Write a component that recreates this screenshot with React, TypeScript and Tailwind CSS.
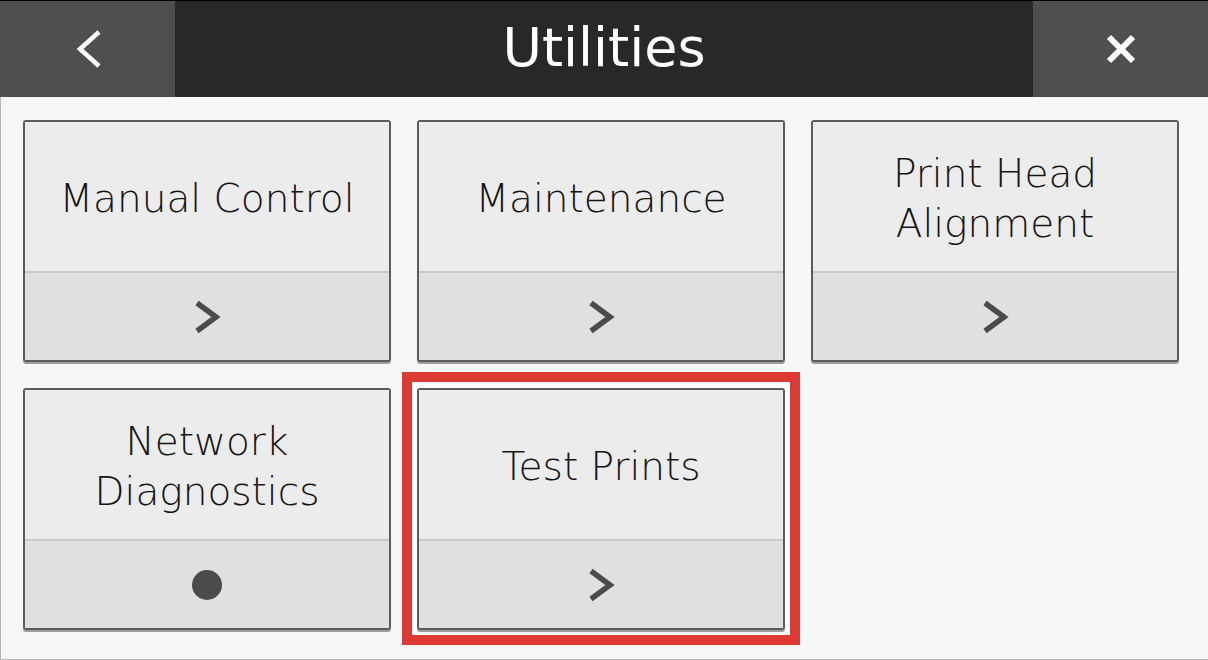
import React from 'react';

type Tile = {
  label: string[];
  icon: 'chevron' | 'dot';
  highlighted?: boolean;
};

const tiles: Tile[] = [
  { label: ['Manual Control'], icon: 'chevron' },
  { label: ['Maintenance'], icon: 'chevron' },
  { label: ['Print Head', 'Alignment'], icon: 'chevron' },
  { label: ['Network', 'Diagnostics'], icon: 'dot' },
  { label: ['Test Prints'], icon: 'chevron', highlighted: true },
];

function Chevron() {
  return (
    <svg width="28" height="34" viewBox="0 0 28 34" fill="none">
      <polyline points="4,3 23,17 4,31" stroke="#4b4b4b" strokeWidth="5.5" strokeLinejoin="miter" />
    </svg>
  );
}

function TileCard({ tile }: { tile: Tile }) {
  return (
    <div className="relative">
      {tile.highlighted && (
        <div className="absolute -top-[16px] -left-[15px] -right-[15px] -bottom-[15px] border-[10px] border-[#dc3a33] bg-white" />
      )}
      <div className="relative flex h-[242px] flex-col overflow-hidden rounded-[3px] border-2 border-[#5b5b5b] shadow-[0_2px_0_#9c9c9c]">
        <div className="flex h-[151px] flex-col items-center justify-center border-b-2 border-[#c9c9c9] bg-[#ececec] pt-[4px] text-[39px] leading-[50px] font-extralight text-[#141414]">
          {tile.label.map((line) => (
            <span key={line}>{line}</span>
          ))}
        </div>
        <div className="flex flex-1 items-center justify-center bg-[#dfe0df]">
          {tile.icon === 'chevron' ? (
            <Chevron />
          ) : (
            <div className="h-[30px] w-[30px] rounded-full bg-[#4b4b4b]" />
          )}
        </div>
      </div>
    </div>
  );
}

export default function App() {
  return (
    <div
      className="flex h-[660px] w-[1208px] flex-col overflow-hidden"
      style={{ fontFamily: '"DejaVu Sans", "Liberation Sans", sans-serif' }}
    >
      {/* Header */}
      <div className="flex h-[97px] border-t border-black bg-[#272928]">
        <button className="flex w-[175px] items-center justify-center bg-[#4f4f4f]">
          <svg width="30" height="40" viewBox="0 0 30 40" fill="none">
            <polyline points="26,3 7,20 26,37" stroke="#ffffff" strokeWidth="4.5" strokeLinejoin="miter" />
          </svg>
        </button>
        <div className="flex flex-1 items-center justify-center pb-[4px] text-[54px] text-white">
          Utilities
        </div>
        <button className="flex w-[175px] items-center justify-center bg-[#4f4f4f]">
          <svg width="32" height="30" viewBox="0 0 32 30" fill="none">
            <path d="M4 3 L28 27 M28 3 L4 27" stroke="#ffffff" strokeWidth="6" />
          </svg>
        </button>
      </div>

      {/* Tiles */}
      <div className="flex-1 border-b border-l border-[#b8b8b8] bg-[#f6f8f7] pl-[22px] pt-[23px]">
        <div className="grid w-[1156px] grid-cols-3 gap-x-[26px] gap-y-[26px]">
          {tiles.map((tile) => (
            <TileCard key={tile.label.join(' ')} tile={tile} />
          ))}
        </div>
      </div>
    </div>
  );
}
